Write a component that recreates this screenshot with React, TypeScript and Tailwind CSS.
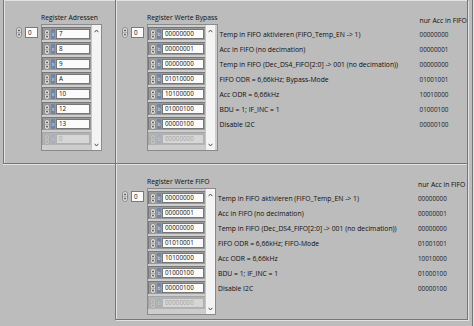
import React from "react";

function Spinner({ disabled = false, h = 11 }: { disabled?: boolean; h?: number }) {
  const fill = disabled ? "#c6c6c6" : "#e6e6e6";
  const stroke = disabled ? "#acacac" : "#8c8c8c";
  const tri = disabled ? "#a6a6a6" : "#5a5a5a";
  const m = h / 2;
  return (
    <svg width="6" height={h} viewBox={`0 0 6 ${h}`} className="shrink-0">
      <rect x="0.5" y="0.5" width="5" height={h - 1} rx="2.5" fill={fill} stroke={stroke} strokeWidth="1" />
      <line x1="1" y1={m} x2="5" y2={m} stroke={stroke} strokeWidth="0.6" />
      <path d={`M3 2 L4.5 ${m - 1.2} L1.5 ${m - 1.2}Z`} fill={tri} />
      <path d={`M3 ${h - 2} L4.5 ${m + 1.2} L1.5 ${m + 1.2}Z`} fill={tri} />
    </svg>
  );
}

function Chevron({ up }: { up?: boolean }) {
  return (
    <svg width="5" height="4" viewBox="0 0 5 4">
      <path d={up ? "M0.6 3.2 L2.5 1 L4.4 3.2" : "M0.6 0.8 L2.5 3 L4.4 0.8"} fill="none" stroke="#3c3c3c" strokeWidth="0.9" />
    </svg>
  );
}

function Element({ value, radix, disabled = false, wide }: { value: string; radix: string; disabled?: boolean; wide: boolean }) {
  return (
    <div
      className={`flex items-center h-[13px] ${wide ? "w-[57px]" : "w-[49px]"} ${
        disabled ? "bg-[#b4b4b4]" : "bg-[#9a9a9a]"
      } border-t border-l ${disabled ? "border-[#a4a4a4]" : "border-[#777777]"} pl-[1px]`}
    >
      <Spinner disabled={disabled} />
      <div
        className={`w-[4px] h-[10px] ml-[1px] ${
          disabled ? "bg-[#a9b0bb] text-[#c8c8c8]" : "bg-[#6f86a8] text-[#dfe6f0]"
        } text-[5px] leading-[10px] text-center overflow-hidden`}
      >
        {radix}
      </div>
      <div
        className={`flex-1 h-[10px] ml-[1px] mr-[1px] border ${
          disabled ? "bg-[#d6d6d6] border-[#b0b0b0] text-[#a4a4a4]" : "bg-[#fbfbfb] border-[#777777] text-[#111111]"
        } text-[6.3px] leading-[8px] pl-[2px] overflow-hidden whitespace-nowrap`}
      >
        {value}
      </div>
    </div>
  );
}

function ArrayCtl({
  label,
  items,
  disabledValue,
  radix,
  wide,
}: {
  label: string;
  items: string[];
  disabledValue: string;
  radix: string;
  wide: boolean;
}) {
  return (
    <div className="flex items-start">
      <div className="flex items-center gap-[3px] mt-[14px]">
        <Spinner h={11} />
        <div className="w-[13px] h-[11px] bg-[#fbfbfb] border border-[#7a7a7a] text-[6.3px] leading-[9px] pl-[2px] text-[#111111]">
          0
        </div>
      </div>
      <div className="flex flex-col ml-[3px]">
        <div className="h-[11px] text-[6.8px] leading-[10px] text-[#0e0e0e] whitespace-nowrap">{label}</div>
        <div className="flex bg-[#cdcdcd] border border-[#8a8a8a] h-[127px]">
          <div className="flex flex-col gap-[2px] pt-[2px]">
            {items.map((v, i) => (
              <Element key={i} value={v} radix={radix} wide={wide} />
            ))}
            <Element value={disabledValue} radix={radix} wide={wide} disabled />
          </div>
          <div className="w-[10px] bg-[#f4f4f4] border-l border-[#c4c4c4] flex flex-col items-center justify-between pt-[4px] pb-[3px]">
            <Chevron up />
            <Chevron />
          </div>
        </div>
      </div>
    </div>
  );
}

const DESC_BYPASS = [
  "Temp in FIFO aktivieren (FIFO_Temp_EN -> 1)",
  "Acc in FIFO (no decimation)",
  "Temp in FIFO (Dec_DS4_FIFO[2:0] -> 001 (no decimation))",
  "FIFO ODR = 6,66kHz; Bypass-Mode",
  "Acc ODR = 6,66kHz",
  "BDU = 1; IF_INC = 1",
  "Disable I2C",
];
const DESC_FIFO = [
  "Temp in FIFO aktivieren (FIFO_Temp_EN -> 1)",
  "Acc in FIFO (no decimation)",
  "Temp in FIFO (Dec_DS4_FIFO[2:0] -> 001 (no decimation))",
  "FIFO ODR = 6,66kHz; FIFO-Mode",
  "Acc ODR = 6,66kHz",
  "BDU = 1; IF_INC = 1",
  "Disable I2C",
];
const ACC = ["00000000", "00000001", "00000000", "01001001", "10010000", "01000100", "00000100"];

function RegPanel({ label, values, desc, top }: { label: string; values: string[]; desc: string[]; top: number }) {
  return (
    <div className="flex items-start pl-[6px]" style={{ paddingTop: top }}>
      <ArrayCtl label={label} items={values} disabledValue="00000000" radix="b" wide />
      <div className="w-[200px] ml-[2px] pt-[15px] flex flex-col gap-[2px]">
        {desc.map((d, i) => (
          <div key={i} className="h-[13px] text-[6.8px] leading-[13px] text-[#0e0e0e] whitespace-nowrap">
            {d}
          </div>
        ))}
      </div>
      <div className="flex flex-col pt-[1px]">
        <div className="h-[13px] text-[6.8px] leading-[13px] text-[#0e0e0e] whitespace-nowrap">nur Acc in FIFO</div>
        <div className="flex flex-col gap-[2px] pt-[1px]">
          {ACC.map((v, i) => (
            <div key={i} className="h-[13px] text-[6.3px] leading-[13px] text-[#1a1a1a]">
              {v}
            </div>
          ))}
        </div>
      </div>
    </div>
  );
}

export default function App() {
  return (
    <div className="w-[474px] h-[326px] bg-[#bcbcbc] flex overflow-hidden font-['Open_Sans','Noto_Sans',sans-serif] font-medium">
      <div className="w-[3px] shrink-0" />
      <div className="w-[112px] h-[164px] shrink-0 border-l border-b border-[#767676] shadow-[inset_1px_1px_0_#e2e2e2,0_1px_0_#e2e2e2] pl-[12px] pt-[13px]">
        <ArrayCtl label="Register Adressen" items={["7", "8", "9", "A", "10", "12", "13"]} disabledValue="0" radix="x" wide={false} />
      </div>
      <div className="w-[353px] h-[320px] shrink-0 flex flex-col border-l border-r border-b border-[#767676] shadow-[1px_1px_0_#e2e2e2]">
        <div className="h-[164px] shrink-0 border-b border-[#767676] shadow-[inset_1px_1px_0_#e2e2e2]">
          <RegPanel label="Register Werte Bypass" values={["00000000", "00000001", "00000000", "01010000", "10100000", "01000100", "00000100"]} desc={DESC_BYPASS} top={13} />
        </div>
        <div className="flex-1 shadow-[inset_1px_1px_0_#e2e2e2]">
          <RegPanel label="Register Werte FIFO" values={["00000000", "00000001", "00000000", "01010001", "10100000", "01000100", "00000100"]} desc={DESC_FIFO} top={13} />
        </div>
      </div>
      <div className="w-[4px] shrink-0" />
      <div className="h-full border-l border-[#767676] shadow-[1px_0_0_#e2e2e2]" />
    </div>
  );
}
